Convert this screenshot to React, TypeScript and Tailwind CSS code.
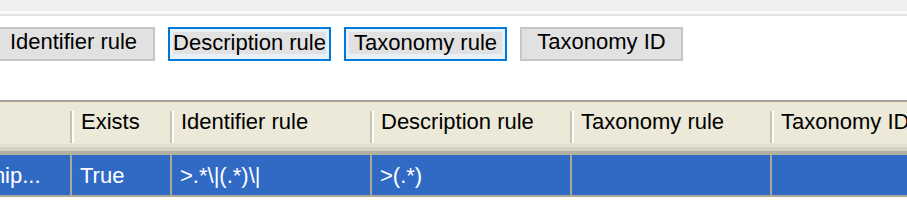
import React from 'react';

const font = { fontFamily: '"Liberation Sans", Arial, sans-serif' };

type Col = { title: string; width: string; rowWidth: string; value: string };

const columns: Col[] = [
    { title: 'Exists', width: 'w-[96px]', rowWidth: 'w-[100px]', value: 'True' },
    { title: 'Identifier rule', width: 'w-[196px]', rowWidth: 'w-[200px]', value: '>.*\\|(.*)\\|' },
    { title: 'Description rule', width: 'w-[196px]', rowWidth: 'w-[200px]', value: '>(.*)' },
    { title: 'Taxonomy rule', width: 'w-[196px]', rowWidth: 'w-[200px]', value: '' },
    { title: 'Taxonomy ID', width: 'w-[196px]', rowWidth: 'w-[200px]', value: '' },
];

function ToolButton({ label, focused }: { label: string; focused?: boolean }) {
    if (focused) {
        return (
            <div className="w-[163px] h-[34px] shrink-0 border-2 border-[#0078d7] bg-[#e8f1fa] px-[3px] pt-[3px] pb-[5px]">
                <div className="h-full bg-[#e1e1e1] flex items-center justify-center text-[22px] leading-none text-black">
                    {label}
                </div>
            </div>
        );
    }
    return (
        <div className="w-[163px] h-[34px] shrink-0 border-2 border-[#c6c6c6] bg-[#e1e1e1] flex items-center justify-center pb-[4px] text-[22px] leading-none text-black">
            {label}
        </div>
    );
}

function HeaderSep() {
    return (
        <div className="flex items-end h-full pb-[1px] shrink-0">
            <div className="w-[2px] h-[32px] bg-[#c7c4b1]" />
            <div className="w-[2px] h-[32px] bg-white" />
        </div>
    );
}

export default function App() {
    return (
        <div className="w-[907px] h-[204px] bg-white overflow-hidden" style={font}>
            <div className="h-[11px] bg-[#f0f0f0]" />
            <div className="h-[3px] bg-[#fbfbfb]" />
            <div className="h-[2px] bg-[#e3e3e3]" />

            <div className="h-[84px] pt-[11px] flex gap-[13px] ml-[-8px]">
                <ToolButton label="Identifier rule" />
                <ToolButton label="Description rule" focused />
                <ToolButton label="Taxonomy rule" focused />
                <ToolButton label="Taxonomy ID" />
            </div>

            <div className="h-[1px] bg-[#a0a0a0]" />
            <div className="h-[1px] bg-[#aca899]" />

            {/* column headers */}
            <div className="flex h-[42px] bg-[#ece9d8] text-[22px] text-black">
                <div className="w-[70px] shrink-0" />
                {columns.map((c) => (
                    <React.Fragment key={c.title}>
                        <HeaderSep />
                        <div className={`${c.width} shrink-0 flex items-center pl-[7px] pb-[3px] whitespace-nowrap`}>
                            {c.title}
                        </div>
                    </React.Fragment>
                ))}
            </div>
            <div className="h-[3px] bg-[#e2dfcf]" />
            <div className="h-[4px] bg-[#d5d1c0]" />
            <div className="h-[4px] bg-[#b4b1a2]" />

            {/* selected row */}
            <div className="flex h-[40px] bg-[#316ac5] text-[22px] text-white">
                <div className="w-[72px] shrink-0 border-r-2 border-[#aca899] flex items-center overflow-hidden whitespace-nowrap">
                    <span className="ml-[-23px]">Unip...</span>
                </div>
                {columns.map((c) => (
                    <div
                        key={c.title}
                        className={`${c.rowWidth} shrink-0 border-r-2 border-[#aca899] flex items-center pl-[8px] whitespace-nowrap`}
                    >
                        {c.value}
                    </div>
                ))}
            </div>
            <div className="h-[2px] bg-[#aca899]" />
        </div>
    );
}
